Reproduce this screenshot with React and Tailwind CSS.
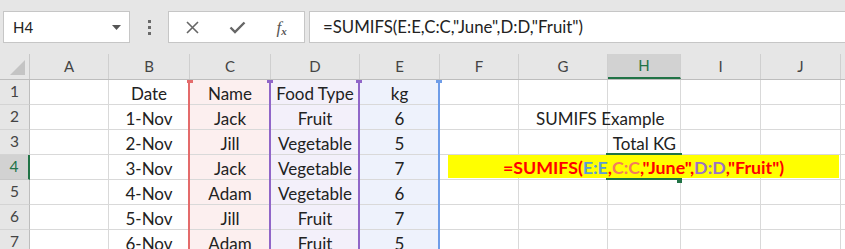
import React from 'react';

const cols = [
  { key: 'A', w: 'w-[79px]' },
  { key: 'B', w: 'w-[81px]' },
  { key: 'C', w: 'w-[81px]', fill: 'bg-[#fcefef]' },
  { key: 'D', w: 'w-[89px]', fill: 'bg-[#f3f0fa]' },
  { key: 'E', w: 'w-[80px]', fill: 'bg-[#eef2fc]' },
  { key: 'F', w: 'w-[79px]' },
  { key: 'G', w: 'w-[89px]' },
  { key: 'H', w: 'w-[73px]' },
  { key: 'I', w: 'w-[80px]' },
  { key: 'J', w: 'w-[80px]' },
];

const data = [
  ['Date', 'Name', 'Food Type', 'kg'],
  ['1-Nov', 'Jack', 'Fruit', '6'],
  ['2-Nov', 'Jill', 'Vegetable', '5'],
  ['3-Nov', 'Jack', 'Vegetable', '7'],
  ['4-Nov', 'Adam', 'Vegetable', '6'],
  ['5-Nov', 'Jill', 'Fruit', '7'],
  ['6-Nov', 'Adam', 'Fruit', '5'],
];

const Toolbar = () => (
  <div className="flex h-[54px] items-start pl-[3px] pt-[11px]">
    <div className="flex h-[32px] w-[127px] items-center justify-between border border-[#c6c6c6] bg-white pl-[9px] pr-[8px] text-[15px] text-[#222]">
      <span>H4</span>
      <svg width="9" height="5" viewBox="0 0 9 5">
        <path d="M0 0h9L4.5 5z" fill="#555" />
      </svg>
    </div>
    <div className="flex h-[32px] w-[38px] flex-col items-center justify-center gap-[3px]">
      <span className="h-[3px] w-[3px] bg-[#6a6a6a]" />
      <span className="h-[3px] w-[3px] bg-[#6a6a6a]" />
      <span className="h-[3px] w-[3px] bg-[#6a6a6a]" />
    </div>
    <div className="flex h-[32px] w-[137px] items-center border border-[#c6c6c6] bg-white pl-[1px]">
      <div className="flex w-[45px] justify-center">
        <svg width="13" height="13" viewBox="0 0 13 13">
          <path d="M1 1l11 11M12 1L1 12" stroke="#666" strokeWidth="1.6" />
        </svg>
      </div>
      <div className="flex w-[45px] justify-center">
        <svg width="17" height="13" viewBox="0 0 17 13">
          <path d="M1.5 6.5l4.5 4.5L15.5 1.5" stroke="#666" strokeWidth="2.4" fill="none" />
        </svg>
      </div>
      <div className="flex w-[45px] items-baseline justify-center font-['Liberation_Serif',serif] text-[17px] italic leading-none text-[#555]">
        f<span className="translate-y-[2px] text-[11px] font-bold">x</span>
      </div>
    </div>
    <div className="ml-[4px] flex h-[32px] flex-1 items-center border border-r-0 border-[#c6c6c6] bg-white pl-[13px] text-[16.8px] text-[#222]">
      =SUMIFS(E:E,C:C,"June",D:D,"Fruit")
    </div>
  </div>
);

const HeaderRow = () => (
  <div className="flex h-[26px] border-b border-[#bdbdbd] text-[15px] text-[#444]">
    <div className="relative w-[30px] shrink-0 border-r border-[#c8c8c8]">
      <svg className="absolute left-[10px] top-[6px]" width="15" height="15" viewBox="0 0 15 15">
        <path d="M15 0V15H0z" fill="#c4c4c4" />
      </svg>
    </div>
    {cols.map((c) => (
      <div
        key={c.key}
        className={`${c.w} flex shrink-0 items-center justify-center border-r border-[#cfcfcf] ${
          c.key === 'H' ? 'border-b-2 border-b-[#217346] bg-[#d2d2d2] text-[#217346]' : ''
        }`}
      >
        {c.key}
      </div>
    ))}
    <div className="flex-1" />
  </div>
);

const cellText = (r, key) => {
  const row = data[r];
  if (key === 'B') return row[0];
  if (key === 'C') return row[1];
  if (key === 'D') return row[2];
  if (key === 'E') return row[3];
  return null;
};

export default function App() {
  return (
    <div className="h-[249px] w-[845px] overflow-hidden bg-[#e6e6e6] font-['Lato',sans-serif] text-[#222]">
      <Toolbar />
      <HeaderRow />
      <div className="relative bg-white text-[17px]">
        {data.map((_, r) => (
          <div key={r} className="flex h-[25px]">
            <div
              className={`flex w-[30px] shrink-0 items-center justify-center border-b border-r text-[15.5px] ${
                r === 3
                  ? 'border-b-[#c8c8c8] border-r-2 border-r-[#217346] bg-[#d2d2d2] text-[#217346]'
                  : 'border-b-[#d4d4d4] border-r-[#bdbdbd] bg-[#e6e6e6] text-[#444]'
              }`}
            >
              {r + 1}
            </div>
            {cols.map((c) => (
              <div
                key={c.key}
                className={`${c.w} ${c.fill || ''} flex shrink-0 items-center justify-center whitespace-nowrap border-b border-r border-[#d9d9d9] pt-[3px]`}
              >
                {cellText(r, c.key)}
                {r === 1 && c.key === 'G' && (
                  <span className="relative z-10 w-full pl-[17px]">SUMIFS Example</span>
                )}
                {r === 2 && c.key === 'H' && (
                  <span className="w-full pr-[4px] text-right">Total KG</span>
                )}
              </div>
            ))}
            <div className="flex-1 border-b border-[#d9d9d9]" />
          </div>
        ))}

        {/* range highlight borders */}
        <div className="absolute bottom-0 left-[188px] top-0 w-[2px] bg-[#e46b6b]" />
        <div className="absolute left-[187px] top-0 h-[3px] w-[6px] bg-[#e46b6b]" />
        <div className="absolute bottom-0 left-[269px] top-0 w-[2px] bg-[#9066c8]" />
        <div className="absolute left-[267px] top-0 h-[3px] w-[6px] bg-[#9066c8]" />
        <div className="absolute bottom-0 left-[358px] top-0 w-[2px] bg-[#9066c8]" />
        <div className="absolute left-[356px] top-0 h-[3px] w-[6px] bg-[#9066c8]" />
        <div className="absolute bottom-0 left-[438px] top-0 w-[2px] bg-[#6f9de8]" />
        <div className="absolute left-[436px] top-0 h-[3px] w-[6px] bg-[#6f9de8]" />

        {/* active cell H4 in edit mode */}
        <div className="absolute left-[606px] top-[73px] z-20 h-[27px] w-[76px] border-2 border-[#217346]" />
        <div className="absolute left-[448px] top-[75px] z-30 flex h-[23px] w-[391px] items-center justify-center whitespace-nowrap bg-[#ffff00] pt-[1px] text-[17.8px] font-bold text-[#ff0000]">
          =SUMIFS(<span className="text-[#5b9bd5]">E:E</span>,<span className="text-[#f47c5c]">C:C</span>,"June",
          <span className="text-[#9a72c6]">D:D</span>,"Fruit")
        </div>
        <div className="absolute left-[677px] top-[98px] z-40 h-[5px] w-[5px] bg-[#217346]" />
      </div>
    </div>
  );
}
